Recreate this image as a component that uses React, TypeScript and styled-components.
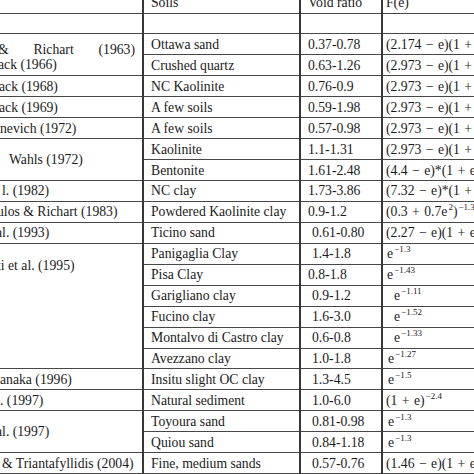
import React from 'react';
import styled, { createGlobalStyle } from 'styled-components';

const GlobalStyle = createGlobalStyle`
  html, body {
    margin: 0;
    padding: 0;
    background: #ffffff;
    overflow: hidden;
  }
`;

const Page = styled.div`
  width: 474px;
  height: 474px;
  overflow: hidden;
  background: #ffffff;
`;

const Table = styled.table`
  border-collapse: collapse;
  table-layout: fixed;
  width: 600px;
  margin-top: -8px;
  font-family: 'Liberation Serif', 'Times New Roman', serif;
  font-size: 13.7px;
  color: #1a1a1a;
`;

const Col = styled.col<{ $width: number }>`
  width: ${(p) => p.$width}px;
`;

const HeadRow = styled.tr`
  height: 21px;
`;

const BodyRow = styled.tr`
  height: 20.95px;
`;

const Td = styled.td<{ $pad?: number }>`
  padding: 0 0 0 ${(p) => p.$pad ?? 0}px;
  line-height: 15px;
  white-space: nowrap;
  overflow: hidden;
  vertical-align: middle;
  border-top: 1.5px solid #474747;
  border-bottom: 1.5px solid #474747;
  border-left: 2px solid #383838;
  border-right: 2px solid #383838;

  ${HeadRow} > & {
    border-top: none;
  }
`;

const FormulaTd = styled(Td)`
  word-spacing: 1px;
`;

const RefTd = styled(Td)<{ $indent?: number; $top?: number; $shift?: number }>`
  border-left: none;
  padding: ${(p) => (p.$top ?? p.$shift ?? 0)}px 7px 0 0;
  text-indent: ${(p) => p.$indent ?? 0}px;
  vertical-align: ${(p) => (p.$top ? 'top' : 'middle')};
`;

const Justified = styled.div`
  display: flex;
  justify-content: space-between;
`;

const Sup = styled.sup`
  font-size: 9px;
  line-height: 0;
  vertical-align: 6px;
  margin-left: 1px;
  word-spacing: 0;
`;

interface Row {
  soil: string;
  voidRatio: string;
  voidIndent?: number;
  f: React.ReactNode;
  fIndent?: number;
}

const exp = (power: string) => (
  <>
    e<Sup>−{power}</Sup>
  </>
);

const rows: Row[] = [
  { soil: 'Ottawa sand', voidRatio: '0.37-0.78', f: '(2.174 − e)(1 + e)' },
  { soil: 'Crushed quartz', voidRatio: '0.63-1.26', f: '(2.973 − e)(1 + e)' },
  { soil: 'NC Kaolinite', voidRatio: '0.76-0.9', f: '(2.973 − e)(1 + e)' },
  { soil: 'A few soils', voidRatio: '0.59-1.98', f: '(2.973 − e)(1 + e)' },
  { soil: 'A few soils', voidRatio: '0.57-0.98', f: '(2.973 − e)(1 + e)' },
  { soil: 'Kaolinite', voidRatio: '1.1-1.31', f: '(2.973 − e)(1 + e)' },
  { soil: 'Bentonite', voidRatio: '1.61-2.48', f: '(4.4 − e)*(1 + e)' },
  { soil: 'NC clay', voidRatio: '1.73-3.86', f: '(7.32 − e)*(1 + e)' },
  {
    soil: 'Powdered Kaolinite clay',
    voidRatio: '0.9-1.2',
    f: (
      <>
        (0.3 + 0.7e<Sup>2</Sup>)<Sup>−1.3</Sup>
      </>
    ),
  },
  { soil: 'Ticino sand', voidRatio: '0.61-0.80', voidIndent: 4, f: '(2.27 − e)(1 + e)' },
  { soil: 'Panigaglia Clay', voidRatio: '1.4-1.8', voidIndent: 4, f: exp('1.3'), fIndent: 1 },
  { soil: 'Pisa Clay', voidRatio: '0.8-1.8', f: exp('1.43'), fIndent: 1 },
  { soil: 'Garigliano clay', voidRatio: '0.9-1.2', voidIndent: 4, f: exp('1.11'), fIndent: 8 },
  { soil: 'Fucino clay', voidRatio: '1.6-3.0', voidIndent: 4, f: exp('1.52'), fIndent: 8 },
  { soil: 'Montalvo di Castro clay', voidRatio: '0.6-0.8', voidIndent: 4, f: exp('1.33'), fIndent: 8 },
  { soil: 'Avezzano clay', voidRatio: '1.0-1.8', voidIndent: 4, f: exp('1.27'), fIndent: 2 },
  { soil: ' Insitu slight OC clay', voidRatio: '1.3-4.5', voidIndent: 4, f: exp('1.5'), fIndent: 2 },
  {
    soil: 'Natural sediment',
    voidRatio: '1.0-6.0',
    voidIndent: 4,
    f: (
      <>
        (1 + e)<Sup>−2.4</Sup>
      </>
    ),
  },
  { soil: 'Toyoura sand', voidRatio: '0.81-0.98', voidIndent: 4, f: exp('1.3'), fIndent: 2 },
  { soil: 'Quiou sand', voidRatio: '0.84-1.18', voidIndent: 4, f: exp('1.3'), fIndent: 2 },
  { soil: 'Fine, medium sands', voidRatio: '0.57-0.76', voidIndent: 4, f: '(1.46 − e)(1 + e)' },
];

// reference column, cut off at the left edge of the picture
interface RefCell {
  start: number;
  span: number;
  text: React.ReactNode;
  indent?: number;
  top?: number;
  shift?: number;
}

const refs: RefCell[] = [
  {
    start: 0,
    span: 2,
    text: (
      <>
        <Justified>
          <span>&amp;</span>
          <span>Richart</span>
          <span>(1963)</span>
        </Justified>
        <div>ack (1966)</div>
      </>
    ),
    indent: -2,
    shift: 5,
  },
  { start: 2, span: 1, text: 'ack (1968)', indent: -1 },
  { start: 3, span: 1, text: 'ack (1969)', indent: -1 },
  { start: 4, span: 1, text: 'nevich (1972)', indent: 0 },
  { start: 5, span: 2, text: 'Wahls (1972)', indent: 9 },
  { start: 7, span: 1, text: 'l. (1982)', indent: 2 },
  { start: 8, span: 1, text: 'ulos & Richart (1983)', indent: -3 },
  { start: 9, span: 1, text: 'al. (1993)', indent: -4 },
  { start: 10, span: 6, text: 'ti et al. (1995)', indent: -3, top: 14 },
  { start: 16, span: 1, text: 'anaka (1996)', indent: 0 },
  { start: 17, span: 1, text: '. (1997)', indent: 0 },
  { start: 18, span: 2, text: 'al. (1997)', indent: -4 },
  { start: 20, span: 1, text: '& Triantafyllidis (2004)', indent: 2 },
];

const App = () => (
  <>
    <GlobalStyle />
    <Page>
      <Table>
        <colgroup>
          <Col $width={143} />
          <Col $width={157} />
          <Col $width={82} />
          <Col $width={218} />
        </colgroup>
        <tbody>
          <HeadRow>
            <RefTd />
            <Td $pad={7}>Soils</Td>
            <Td $pad={7}>Void ratio</Td>
            <FormulaTd $pad={3}>F(e)</FormulaTd>
          </HeadRow>
          <BodyRow>
            <RefTd />
            <Td />
            <Td />
            <FormulaTd />
          </BodyRow>
          {rows.map((row, i) => {
            const ref = refs.find((r) => r.start === i);
            return (
              <BodyRow key={i}>
                {ref && (
                  <RefTd
                    rowSpan={ref.span}
                    $indent={ref.indent ?? 0}
                    $top={ref.top}
                    $shift={ref.shift}
                  >
                    {ref.text}
                  </RefTd>
                )}
                <Td $pad={7}>{row.soil}</Td>
                <Td $pad={7 + (row.voidIndent ?? 0)}>{row.voidRatio}</Td>
                <FormulaTd $pad={3 + (row.fIndent ?? 0)}>{row.f}</FormulaTd>
              </BodyRow>
            );
          })}
        </tbody>
      </Table>
    </Page>
  </>
);

export default App;
